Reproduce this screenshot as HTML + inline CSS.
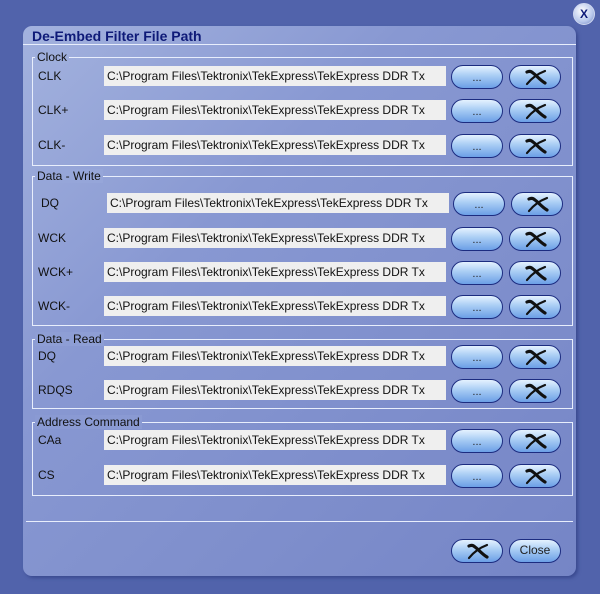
<!DOCTYPE html>
<html><head><style>
*{margin:0;padding:0;box-sizing:border-box}
body{width:600px;height:594px;background:#5163ab;position:relative;overflow:hidden;font-family:"Liberation Sans",Arial,sans-serif}
.panel{position:absolute;left:23px;top:26px;width:553px;height:550px;border-radius:9px;background:linear-gradient(135deg,#a3b2de 0%,#8898d2 35%,#7585c6 100%);box-shadow:2px 2px 3px #3a4a90}
.title{position:absolute;left:32px;top:28px;font-size:14px;font-weight:bold;color:#0e1a78}
.hline{position:absolute;left:23px;width:553px;height:1px;background:#e8eefc}
.grp{position:absolute;left:32px;width:541px;border:1px solid #e8eefc}
.gl{position:absolute;left:2px;top:-8px;font-size:12px;color:#111;padding:0 2px}
.lbl{position:absolute;font-size:12px;color:#111}
.fld{position:absolute;height:20px;background:#efefef;font-size:12px;color:#111;padding:3px 3px;white-space:nowrap;overflow:hidden}
.btn{position:absolute;height:24px;width:52px;border-radius:12px;border:1.5px solid #1c2c80;background:linear-gradient(#e4f2ff 0%,#a8ccf4 45%,#6c9fe6 100%);text-align:center;font-size:11px;color:#222}
.btn svg{position:absolute;left:14px;top:2px}
.x{position:absolute;left:573px;top:3px;width:22px;height:22px;border-radius:50%;background:radial-gradient(circle at 40% 35%,#fff,#b8c8ec 60%,#6a80c0);border:1px solid #d0d8f0;font-size:12px;font-weight:bold;color:#0e1a78;text-align:center;line-height:20px}
</style></head><body>
<div class="x">X</div>
<div class="panel"></div>
<div class="title">De-Embed Filter File Path</div>
<div class="hline" style="top:44px"></div>
<div class="hline" style="top:521px;left:26px;width:547px"></div>

<div class="grp" style="top:57px;height:109px"><span class="gl" style="background:#9eaedc">Clock</span></div>
<div class="grp" style="top:176px;height:150px"><span class="gl" style="background:#96a6d9">Data - Write</span></div>
<div class="grp" style="top:339px;height:70px"><span class="gl" style="background:#8e9ed5">Data - Read</span></div>
<div class="grp" style="top:422px;height:74px"><span class="gl" style="background:#8a9ad3">Address Command</span></div>

<div id="rows"></div>
<script>
const X='<svg width="24" height="18" viewBox="0 0 24 18"><path d="M3 16 C7 11 13 6 21 3" stroke="#111" stroke-width="2.2" fill="none" stroke-linecap="round"/><path d="M3 4 C5 3 7 3 9 5 C13 8 16 12 21 15" stroke="#111" stroke-width="3.2" fill="none" stroke-linecap="round"/></svg>';
const rows=[["CLK",76,38,104,451],["CLK+",110,38,104,451],["CLK-",145,38,104,451],
["DQ",203,41,107,453],["WCK",238,38,104,451],["WCK+",272,38,104,451],["WCK-",306,38,104,451],
["DQ",356,38,104,451],["RDQS",390,38,104,451],["CAa",440,38,104,451],["CS",475,38,104,451]];
let h='';
for(const [n,y,lx,fx,bx] of rows){
h+=`<div class="lbl" style="left:${lx}px;top:${y-7}px">${n}</div>`;
h+=`<div class="fld" style="left:${fx}px;top:${y-10}px;width:342px">C:\\Program Files\\Tektronix\\TekExpress\\TekExpress DDR Tx</div>`;
h+=`<div class="btn" style="left:${bx}px;top:${y-11}px;line-height:24px">...</div>`;
h+=`<div class="btn" style="left:${bx+58}px;top:${y-11}px">${X}</div>`;
}
h+=`<div class="btn" style="left:451px;top:539px">${X}</div>`;
h+=`<div class="btn" style="left:509px;top:539px;font-size:12px;line-height:21px">Close</div>`;
document.getElementById('rows').innerHTML=h;
</script>
</body></html>
